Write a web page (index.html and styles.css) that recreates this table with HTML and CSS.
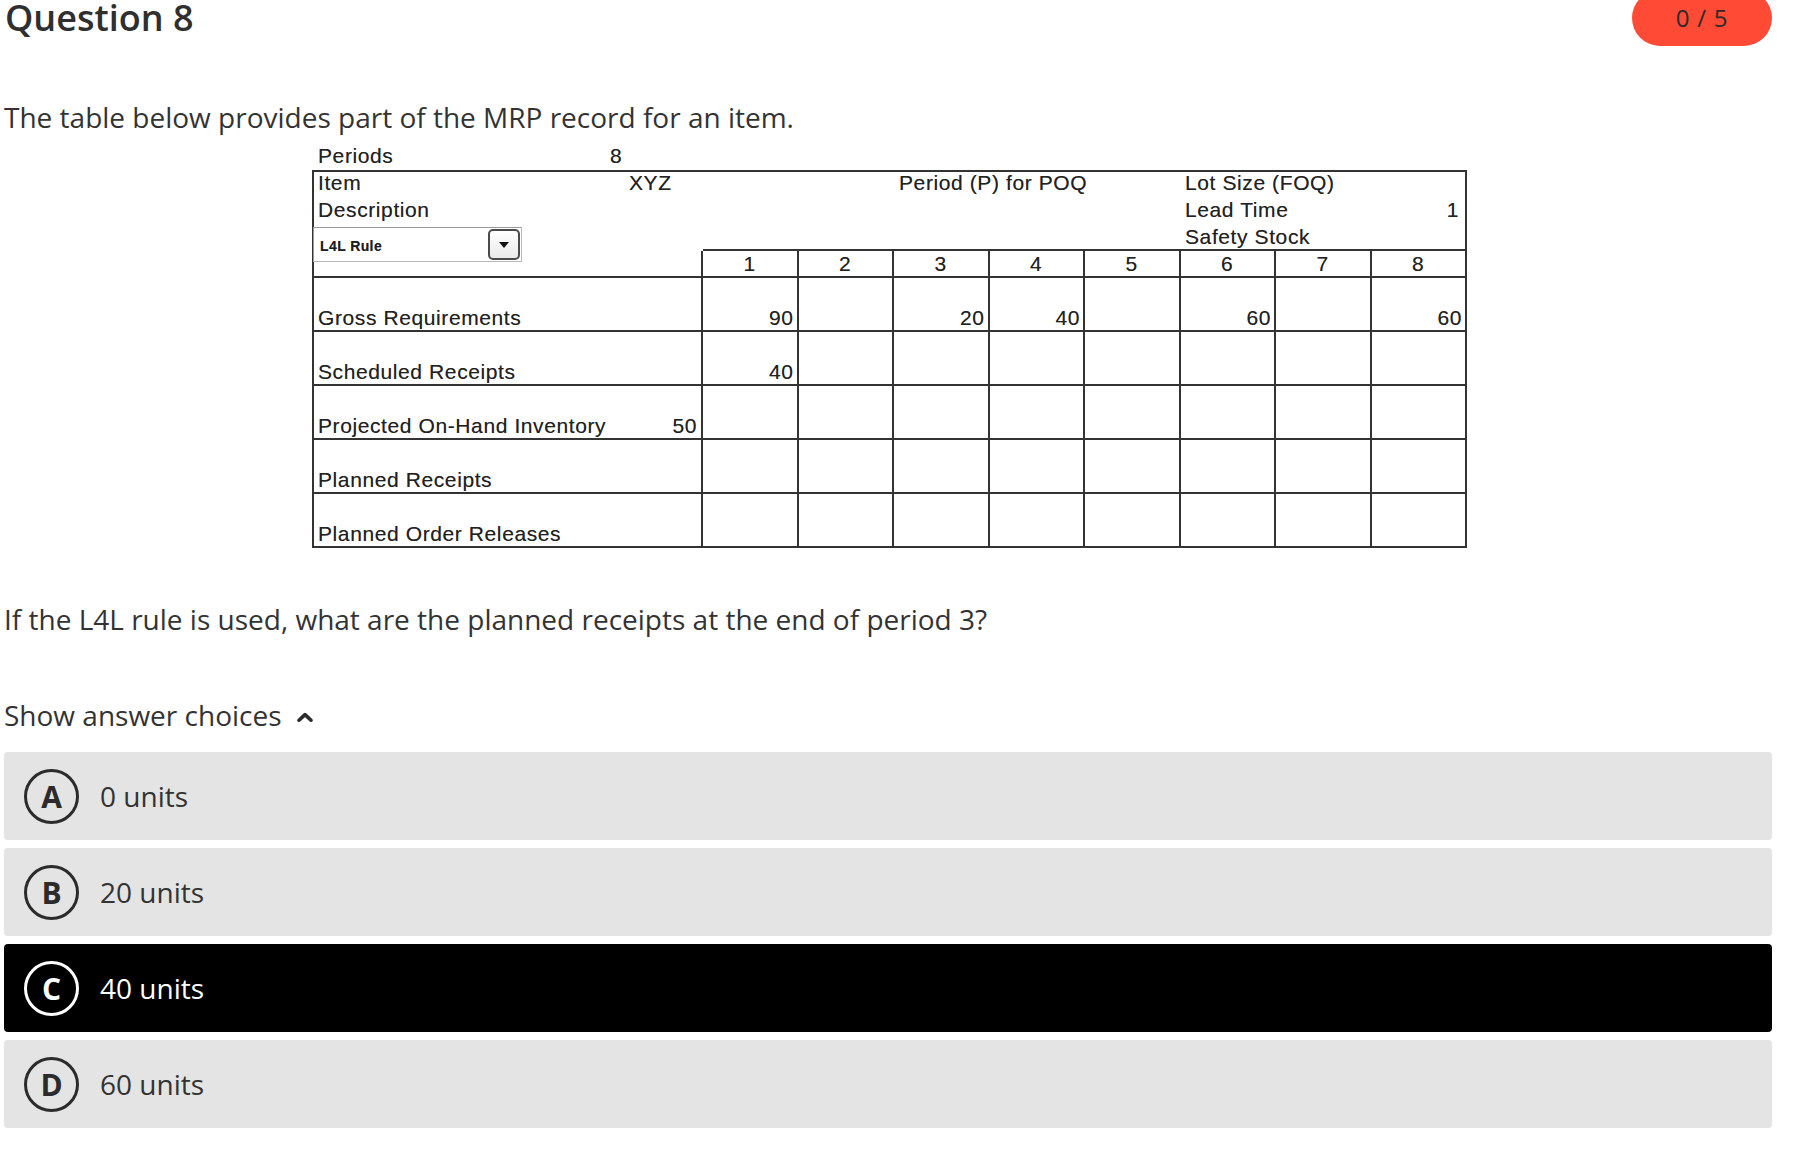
FILE: index.html
```html
<!DOCTYPE html>
<html lang="en">
<head>
<meta charset="utf-8">
<title>Question 8</title>
<link rel="stylesheet" href="styles.css">
</head>
<body>
<main class="page">
  <header class="q-header">
    <h1 class="q-title">Question 8</h1>
    <div class="score">0 / 5</div>
  </header>

  <p class="intro">The table below provides part of the MRP record for an item.</p>

  <div class="mrp">
    <div class="mrp-periods"><span>Periods</span><span>8</span></div>
    <div class="mrp-grid">
      <div class="h-left">
        <div class="h-line"><span>Item</span><span>XYZ</span></div>
        <div class="h-line"><span>Description</span></div>
      </div>
      <div class="h-right">
        <span class="poq">Period (P) for POQ</span>
        <div class="lot-block">
          <div>Lot Size (FOQ)</div>
          <div class="lead"><span>Lead Time</span><span>1</span></div>
          <div>Safety Stock</div>
        </div>
      </div>
      <div class="h-rule">
        <div class="select">
          <span class="select-text">L4L Rule</span>
          <span class="select-btn">
            <svg width="12" height="8" viewBox="0 0 12 8"><polygon points="1,1 11,1 6,7" fill="#111"/></svg>
          </span>
        </div>
      </div>

      <div class="c-blank"></div>
      <div class="c-num">1</div><div class="c-num">2</div><div class="c-num">3</div><div class="c-num">4</div>
      <div class="c-num">5</div><div class="c-num">6</div><div class="c-num">7</div><div class="c-num">8</div>

      <div class="c-label"><span>Gross Requirements</span></div>
      <div class="c-val">90</div><div class="c-val"></div><div class="c-val">20</div><div class="c-val">40</div>
      <div class="c-val"></div><div class="c-val">60</div><div class="c-val"></div><div class="c-val">60</div>

      <div class="c-label"><span>Scheduled Receipts</span></div>
      <div class="c-val">40</div><div class="c-val"></div><div class="c-val"></div><div class="c-val"></div>
      <div class="c-val"></div><div class="c-val"></div><div class="c-val"></div><div class="c-val"></div>

      <div class="c-label"><span>Projected On-Hand Inventory</span><span>50</span></div>
      <div class="c-val"></div><div class="c-val"></div><div class="c-val"></div><div class="c-val"></div>
      <div class="c-val"></div><div class="c-val"></div><div class="c-val"></div><div class="c-val"></div>

      <div class="c-label"><span>Planned Receipts</span></div>
      <div class="c-val"></div><div class="c-val"></div><div class="c-val"></div><div class="c-val"></div>
      <div class="c-val"></div><div class="c-val"></div><div class="c-val"></div><div class="c-val"></div>

      <div class="c-label"><span>Planned Order Releases</span></div>
      <div class="c-val"></div><div class="c-val"></div><div class="c-val"></div><div class="c-val"></div>
      <div class="c-val"></div><div class="c-val"></div><div class="c-val"></div><div class="c-val"></div>
    </div>
  </div>

  <p class="prompt">If the L4L rule is used, what are the planned receipts at the end of period 3?</p>

  <div class="toggle">
    <span>Show answer choices</span>
    <svg class="chev" width="16" height="10" viewBox="0 0 16 10"><polyline points="2,8.2 8,2.6 14,8.2" fill="none" stroke="#2b2b2b" stroke-width="3.6" stroke-linecap="round" stroke-linejoin="round"/></svg>
  </div>

  <ul class="choices">
    <li class="choice"><span class="letter">A</span><span class="choice-text">0 units</span></li>
    <li class="choice"><span class="letter">B</span><span class="choice-text">20 units</span></li>
    <li class="choice selected"><span class="letter">C</span><span class="choice-text">40 units</span></li>
    <li class="choice"><span class="letter">D</span><span class="choice-text">60 units</span></li>
  </ul>
</main>
</body>
</html>
```

FILE: styles.css
```css
html, body {
  margin: 0;
  padding: 0;
  background: #ffffff;
}

body {
  font-family: "Open Sans", "Noto Sans", sans-serif;
  color: #333333;
}

.page {
  padding: 0 29px 0 4px;
}

/* header */
.q-header {
  display: flex;
  justify-content: space-between;
  align-items: flex-start;
  height: 56px;
  margin-top: -11px;
}

.q-title {
  margin: 0;
  font-size: 36px;
  line-height: 58px;
  font-weight: 600;
  color: #2f2f2f;
  padding-left: 1px;
}

.score {
  margin-top: 1px;
  width: 140px;
  height: 56px;
  border-radius: 28px;
  background: #ff4a36;
  color: #2a2a2a;
  font-size: 24px;
  line-height: 56px;
  text-align: center;
  letter-spacing: 0.8px;
}

.intro {
  margin: 53px 0 0 0;
  font-size: 28px;
  line-height: 38px;
}

/* MRP record table (image-like) */
.mrp {
  margin: 10px 0 0 308px;
  width: 1155px;
  font-family: "Liberation Sans", Arial, sans-serif;
  font-size: 21px;
  letter-spacing: 0.6px;
  color: #222222;
  text-shadow: 0 0 0.6px rgba(0, 0, 0, 0.45);
}

.mrp-periods {
  display: grid;
  grid-template-columns: 292px auto;
  padding-left: 6px;
  height: 24px;
  line-height: 20px;
}

.mrp-grid {
  display: grid;
  grid-template-columns: 389px repeat(8, 95.5px);
  grid-template-rows: 54px 25px 27px repeat(5, 54px);
  border-top: 2px solid #333333;
  border-left: 2px solid #333333;
  line-height: 25px;
}

.mrp-grid > div {
  box-sizing: border-box;
  min-width: 0;
}

.h-left {
  grid-column: 1;
  grid-row: 1;
  padding-left: 4px;
  line-height: 27px;
  margin-top: -3px;
}

.h-line {
  display: grid;
  grid-template-columns: 311px auto;
}

.h-right {
  grid-column: 2 / -1;
  grid-row: 1 / 3;
  display: grid;
  grid-template-columns: 196px 286px 1fr;
  align-items: start;
  line-height: 27px;
  border-right: 2px solid #333333;
  border-bottom: 2px solid #333333;
}

.poq {
  grid-column: 2;
  margin-top: -3px;
}

.lot-block {
  grid-column: 3;
  padding-right: 6px;
  margin-top: -3px;
}

.lead {
  display: flex;
  justify-content: space-between;
}

.h-rule {
  grid-column: 1;
  grid-row: 2;
  position: relative;
  z-index: 1;
}

.select {
  margin: 1px 0 0 -1px;
  width: 209px;
  height: 35px;
  box-sizing: border-box;
  border: 1px solid #b9b9b9;
  border-top-color: #9a9a9a;
  border-left-color: #9a9a9a;
  background: #ffffff;
  display: flex;
  align-items: center;
  justify-content: space-between;
  padding: 0 1px 0 6px;
}

.select-text {
  font-size: 14px;
  font-weight: 700;
  letter-spacing: 0.4px;
  color: #1e1e1e;
  padding-top: 4px;
}

.select-btn {
  width: 32px;
  height: 31px;
  box-sizing: border-box;
  border: 2px solid #4a4a4a;
  border-radius: 5px;
  background: linear-gradient(#ffffff, #e9e9e9);
  display: flex;
  align-items: center;
  justify-content: center;
}

.c-blank {
  border-right: 2px solid #333333;
  border-bottom: 2px solid #333333;
}

.c-num {
  border-right: 2px solid #333333;
  border-bottom: 2px solid #333333;
  text-align: center;
}

.c-label {
  display: flex;
  justify-content: space-between;
  align-items: flex-end;
  padding: 0 4px;
  border-right: 2px solid #333333;
  border-bottom: 2px solid #333333;
  white-space: nowrap;
}

.c-val {
  display: flex;
  justify-content: flex-end;
  align-items: flex-end;
  padding-right: 3px;
  border-right: 2px solid #333333;
  border-bottom: 2px solid #333333;
}

/* question */
.prompt {
  margin: 52px 0 0 0;
  font-size: 28px;
  line-height: 38px;
}

.toggle {
  margin-top: 58px;
  display: flex;
  align-items: center;
  gap: 15px;
  font-size: 28px;
  line-height: 38px;
}

.chev {
  display: block;
  margin-top: 3px;
}

.choices {
  list-style: none;
  margin: 18px 0 0 0;
  padding: 0;
  display: flex;
  flex-direction: column;
  gap: 8px;
}

.choice {
  display: flex;
  align-items: center;
  gap: 21px;
  height: 88px;
  box-sizing: border-box;
  padding-left: 20px;
  background: #e4e4e4;
  border-radius: 4px;
  font-size: 28px;
  color: #333333;
}

.letter {
  width: 55px;
  height: 55px;
  box-sizing: border-box;
  border: 3px solid #2b2b2b;
  border-radius: 50%;
  display: flex;
  align-items: center;
  justify-content: center;
  font-weight: 700;
  font-size: 30px;
  color: #2b2b2b;
}

.choice.selected {
  background: #000000;
  color: #ffffff;
}

.choice.selected .letter {
  border-color: #ffffff;
  color: #ffffff;
}
```
